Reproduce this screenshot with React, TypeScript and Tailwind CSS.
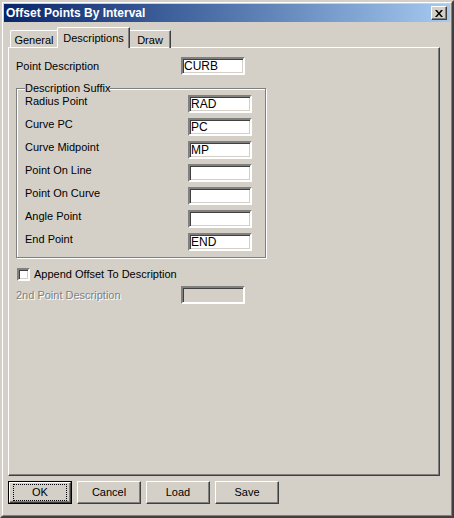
const font = "font-['Liberation_Sans',Arial,sans-serif]";

const sunken =
  "border-2 border-t-[#808080] border-l-[#808080] border-b-white border-r-white shadow-[inset_1px_1px_0_#404040,inset_-1px_-1px_0_#d4d0c8]";

const Field = ({ value, className = "", disabled = false }: { value?: string; className?: string; disabled?: boolean }) => (
  <div
    className={`${sunken} ${disabled ? "bg-[#d4d0c8]" : "bg-white"} h-[18px] pl-[1px] text-[12px] leading-[14px] text-black ${className}`}
  >
    {value}
  </div>
);

const Button = ({ label, isDefault = false }: { label: string; isDefault?: boolean }) => (
  <div
    className={`h-[23px] w-[64px] ${isDefault ? "border border-black" : ""} bg-[#d4d0c8]`}
  >
    <div className="flex h-full w-full items-center justify-center border-t border-l border-white border-r border-b border-r-[#404040] border-b-[#404040] shadow-[inset_-1px_-1px_0_#808080]">
      <span
        className={`flex h-[15px] w-[52px] items-center justify-center text-[11px] ${isDefault ? "outline outline-1 outline-dotted outline-black" : ""}`}
      >
        {label}
      </span>
    </div>
  </div>
);

const rows = [
  ["Radius Point", "RAD"],
  ["Curve PC", "PC"],
  ["Curve Midpoint", "MP"],
  ["Point On Line", ""],
  ["Point On Curve", ""],
  ["Angle Point", ""],
  ["End Point", "END"],
];

export default function App() {
  return (
    <div
      className={`${font} flex h-[518px] w-[454px] flex-col border-2 border-t-[#d4d0c8] border-l-[#d4d0c8] border-r-[#404040] border-b-[#404040] bg-[#d4d0c8] text-black`}
    >
      <div className="flex h-full flex-col border border-t-white border-l-white border-r-[#808080] border-b-[#808080] px-[1px] pt-[1px]">
        {/* title bar */}
        <div className="flex h-[18px] items-center justify-between bg-gradient-to-r from-[#0a246a] to-[#a6caf0] pl-[2px] pr-[3px]">
          <span className="text-[12px] font-bold text-white">Offset Points By Interval</span>
          <div className="flex h-[14px] w-[16px] items-center justify-center border border-t-white border-l-white border-r-[#404040] border-b-[#404040] bg-[#d4d0c8] shadow-[inset_-1px_-1px_0_#808080]">
            <svg width="8" height="7" viewBox="0 0 8 7">
              <path d="M0 0h2l2 2.5L6 0h2L5 3.5 8 7H6L4 4.5 2 7H0l3-3.5z" fill="#000" />
            </svg>
          </div>
        </div>

        <div className="flex flex-1 flex-col px-[4px] pt-[6px]">
          {/* tabs */}
          <div className="relative z-10 flex h-[19px] items-end pl-[2px]">
            <div className="mb-[-1px] flex h-[18px] w-[48px] items-center justify-center rounded-tl-[2px] border-t border-l border-white border-r border-r-[#404040] text-[11px]">
              <span className="pt-[1px]">General</span>
            </div>
            <div className="mb-[-1px] ml-[-1px] flex h-[21px] w-[73px] items-start justify-center rounded-tl-[2px] border-t border-l border-white border-r border-r-[#404040] bg-[#d4d0c8] pt-[2px] text-[11px] shadow-[inset_-1px_0_0_#808080]">
              Descriptions
            </div>
            <div className="mb-[-1px] flex h-[18px] w-[41px] items-center justify-center border-t border-white border-r border-r-[#404040] text-[11px] shadow-[inset_-1px_0_0_#808080]">
              <span className="pt-[1px]">Draw</span>
            </div>
          </div>

          {/* tab panel */}
          <div className="h-[429px] w-[432px] border border-t-white border-l-white border-r-[#404040] border-b-[#404040] shadow-[inset_-1px_-1px_0_#808080]">
            <div className="flex flex-col pl-[7px] pt-[9px]">
              <div className="flex h-[18px] items-center">
                <span className="w-[165px] text-[11px]">Point Description</span>
                <Field value="CURB" className="w-[64px]" />
              </div>

              <fieldset className="mt-[7px] w-[250px] border border-[#808080] pb-[6px] pl-[8px] shadow-[1px_1px_0_#fff,inset_1px_1px_0_#fff]">
                <legend className="bg-[#d4d0c8] text-[11px] leading-[13px]">
                  Description Suffix
                </legend>
                <div className="flex flex-col gap-[5px]">
                  {rows.map(([label, value]) => (
                    <div key={label} className="flex h-[18px] items-start">
                      <span className="w-[163px] text-[11px] leading-[13px]">{label}</span>
                      <Field value={value} className="w-[64px]" />
                    </div>
                  ))}
                </div>
              </fieldset>

              <div className="mt-[8px] flex items-center pl-[1px]">
                <div className={`${sunken} h-[13px] w-[13px] bg-white`} />
                <span className="ml-[4px] text-[11px]">Append Offset To Description</span>
              </div>

              <div className="mt-[4px] flex h-[17px] items-center">
                <span className="w-[165px] text-[11px] text-[#808080] [text-shadow:1px_1px_0_#fff]">
                  2nd Point Description
                </span>
                <Field disabled className="h-[17px] w-[64px]" />
              </div>
            </div>
          </div>

          {/* buttons */}
          <div className="mt-[5px] flex gap-[5px]">
            <Button label="OK" isDefault />
            <Button label="Cancel" />
            <Button label="Load" />
            <Button label="Save" />
          </div>
        </div>
      </div>
    </div>
  );
}
